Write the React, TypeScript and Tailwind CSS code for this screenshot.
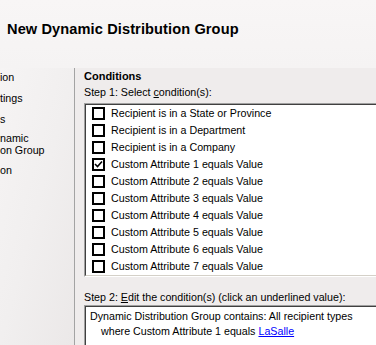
import React from 'react';

const NAV_ITEMS: { lines: string[]; top: string }[] = [
  { lines: ['ion'], top: 'mt-[3px]' },
  { lines: ['tings'], top: 'mt-[9px]' },
  { lines: ['s'], top: 'mt-[9px]' },
  { lines: ['namic', 'on Group'], top: 'mt-[7px]' },
  { lines: ['on'], top: 'mt-[8px]' },
];

const CONDITIONS = [
  'Recipient is in a State or Province',
  'Recipient is in a Department',
  'Recipient is in a Company',
  'Custom Attribute 1 equals Value',
  'Custom Attribute 2 equals Value',
  'Custom Attribute 3 equals Value',
  'Custom Attribute 4 equals Value',
  'Custom Attribute 5 equals Value',
  'Custom Attribute 6 equals Value',
  'Custom Attribute 7 equals Value',
];

const CheckBox = ({ checked }: { checked: boolean }) => (
  <span className="w-[13px] h-[13px] border-2 border-black bg-white flex items-center justify-center shrink-0">
    {checked && (
      <svg width="9" height="9" viewBox="0 0 9 9">
        <path d="M1 4 L3.5 6.5 L8 1.5" fill="none" stroke="#000" strokeWidth="1.6" />
      </svg>
    )}
  </span>
);

export default function App() {
  return (
    <div
      className="w-[376px] h-[345px] overflow-hidden bg-[#efecec] text-[10.7px] leading-[13px] text-black"
      style={{ fontFamily: '"Liberation Sans", Arial, sans-serif' }}
    >
      <div className="h-[68px] pl-[7px] pt-[21px] bg-gradient-to-b from-[#f8f6f6] to-[#f5f3f3]">
        <h1 className="text-[14.6px] leading-[17px] font-bold tracking-[0.1px]">New Dynamic Distribution Group</h1>
      </div>
      <div className="flex h-[277px]">
        <div className="w-[75px] shrink-0 border-r border-[#a3a3a3] bg-gradient-to-br from-[#f6f4f4] via-[#f1efef] to-[#ebe8e8]">
          {NAV_ITEMS.map((item, i) => (
            <div key={i} className={item.top}>
              {item.lines.map((l) => (
                <div key={l} className="leading-[12px]">
                  {l}
                </div>
              ))}
            </div>
          ))}
        </div>
        <div className="flex-1 pl-[9px] pt-[2px]">
          <div className="font-bold text-[11px]">Conditions</div>
          <div className="mt-[3px]">
            Step 1: Select <u>c</u>ondition(s):
          </div>
          <div className="mt-[4px] w-[310px] border-t border-l border-[#a0a0a0] border-r border-b border-r-white border-b-white">
            <div className="border-t border-l border-[#404040] border-b border-b-[#d4d0c8] bg-white">
              {CONDITIONS.map((c, i) => (
                <div key={c} className="h-[17px] flex items-center pl-[6px] gap-[6px]">
                  <CheckBox checked={i === 3} />
                  <span className="whitespace-nowrap">{c}</span>
                </div>
              ))}
            </div>
          </div>
          <div className="mt-[14px]">
            Step 2: <u>E</u>dit the condition(s) (click an underlined value):
          </div>
          <div className="mt-[1px] w-[310px] h-[60px] border-t border-l border-[#a0a0a0]">
            <div className="h-full border-t border-l border-[#404040] bg-white pl-[4px] pt-[2px]">
              <div className="leading-[15px] whitespace-nowrap">Dynamic Distribution Group contains: All recipient types</div>
              <div className="leading-[15px] whitespace-nowrap pl-[11px]">
                where Custom Attribute 1 equals{' '}
                <span className="text-[#0000ff] underline">LaSalle</span>
              </div>
            </div>
          </div>
        </div>
      </div>
    </div>
  );
}
